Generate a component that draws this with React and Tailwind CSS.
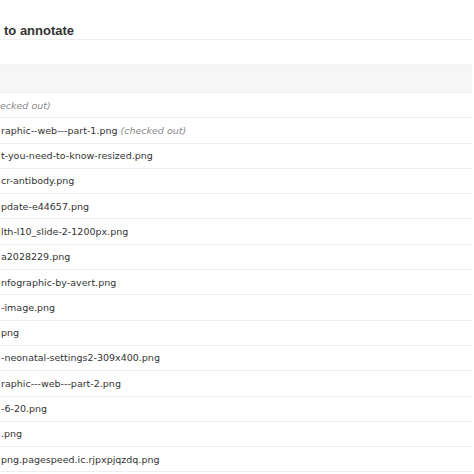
const files = [
  { name: '(checked out)', cut: true },
  { name: 'raphic--web---part-1.png', out: true },
  { name: 't-you-need-to-know-resized.png' },
  { name: 'cr-antibody.png' },
  { name: 'pdate-e44657.png' },
  { name: 'lth-l10_slide-2-1200px.png' },
  { name: 'a2028229.png' },
  { name: 'nfographic-by-avert.png' },
  { name: '-image.png' },
  { name: 'png' },
  { name: '-neonatal-settings2-309x400.png' },
  { name: 'raphic---web---part-2.png' },
  { name: '-6-20.png' },
  { name: '.png' },
  { name: 'png.pagespeed.ic.rjpxpjqzdq.png' },
]

export default function App() {
  return (
    <div className="w-[474px] h-[474px] overflow-hidden bg-white">
      <div className="w-[472px]">
        <h2 className="h-[40px] pt-[23px] pl-[4px] border-b border-[#f0f0f0] text-[13px] leading-[16px] font-bold text-[#333] font-['Liberation_Sans',Arial,sans-serif]">
          to annotate
        </h2>
        <div className="mt-[24px] border-t border-[#f4f4f4]">
          <div className="h-[28px] bg-[#f6f6f6] border-b border-[#ececec]" />
          {files.map((f, i) => (
            <div
              key={i}
              className="h-[25.3px] flex items-center overflow-hidden border-b border-[#efefef] pl-[1px] pt-[1px] text-[9.5px] text-[#333] font-['DejaVu_Sans',Verdana,sans-serif] whitespace-nowrap"
            >
              {f.cut ? (
                <span className="italic text-[#8a8a8a] ml-[-16px]">{f.name}</span>
              ) : (
                <span>
                  {f.name}
                  {f.out && <span className="italic text-[#8a8a8a]"> (checked out)</span>}
                </span>
              )}
            </div>
          ))}
        </div>
      </div>
    </div>
  )
}
